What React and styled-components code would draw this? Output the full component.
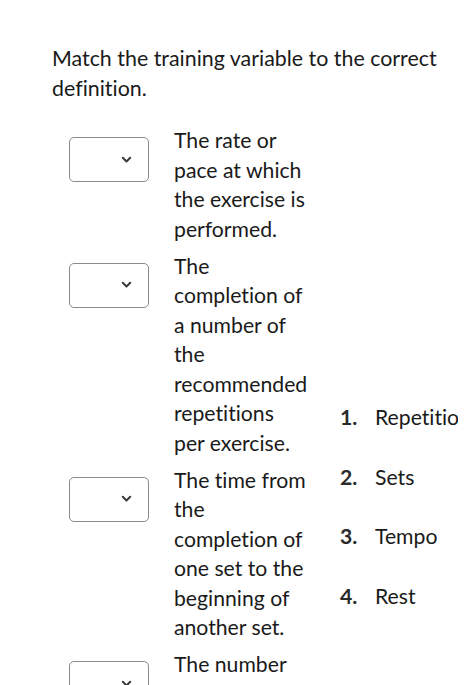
import React from "react";
import styled, { createGlobalStyle } from "styled-components";

const Global = createGlobalStyle`
  body {
    margin: 0;
    background: #fff;
    font-family: Lato, "Open Sans", sans-serif;
    color: #1a1a1a;
    font-variant-ligatures: none;
  }
`

const Page = styled.div`
  width: 474px;
  height: 685px;
  overflow: hidden;
  padding: 43px 0 0 52px;
  box-sizing: border-box;
`

const Prompt = styled.p`
  margin: 0;
  width: 400px;
  font-size: 21.4px;
  line-height: 30px;
`

const Board = styled.div`
  display: flex;
  margin-top: 23px;
`

const Pairs = styled.div`
  display: flex;
  flex-direction: column;
  gap: 7.5px;
  padding-left: 17px;
`

const Pair = styled.div`
  display: flex;
  align-items: flex-start;
  gap: 25px;
`

const Select = styled.div`
  width: 80px;
  height: 45px;
  margin-top: 11px;
  box-sizing: border-box;
  border: 1px solid #8a8a8a;
  border-radius: 5px;
  display: flex;
  align-items: center;
  padding-left: 51px;
  flex-shrink: 0;
`

const Definition = styled.div`
  width: 134px;
  font-size: 21.2px;
  line-height: 29.5px;
`

const Choices = styled.ol`
  list-style: none;
  margin: 277px 0 0 0;
  padding: 0 0 0 32px;
  width: 118px;
  overflow: hidden;
  display: flex;
  flex-direction: column;
  gap: 30px;
`

const Choice = styled.li`
  display: flex;
  font-size: 21.2px;
  line-height: 29.5px;
  white-space: nowrap;
`

const Num = styled.span`
  width: 35px;
  flex-shrink: 0;
  font-weight: 700;
  color: #2a2a2a;
`

const Chevron = () => (
  <svg width="11" height="8" viewBox="0 0 11 8">
    <path d="M1.8 1.8 L5.5 5.5 L9.2 1.8" fill="none" stroke="#3a3a3a" strokeWidth="2" strokeLinecap="round" strokeLinejoin="round" />
  </svg>
)

const definitions = [
  "The rate or pace at which the exercise is performed.",
  "The completion of a number of the recommended repetitions per exercise.",
  "The time from the completion of one set to the beginning of another set.",
  "The number of times an exercise is performed.",
]

const choices = ["Repetitions", "Sets", "Tempo", "Rest"]

export default function App() {
  return (
    <Page>
      <Global />
      <Prompt>Match the training variable to the correct definition.</Prompt>
      <Board>
        <Pairs>
          {definitions.map((d, i) => (
            <Pair key={i}>
              <Select><Chevron /></Select>
              <Definition>{d}</Definition>
            </Pair>
          ))}
        </Pairs>
        <Choices>
          {choices.map((c, i) => (
            <Choice key={c}>
              <Num>{i + 1}.</Num>
              <span>{c}</span>
            </Choice>
          ))}
        </Choices>
      </Board>
    </Page>
  )
}
